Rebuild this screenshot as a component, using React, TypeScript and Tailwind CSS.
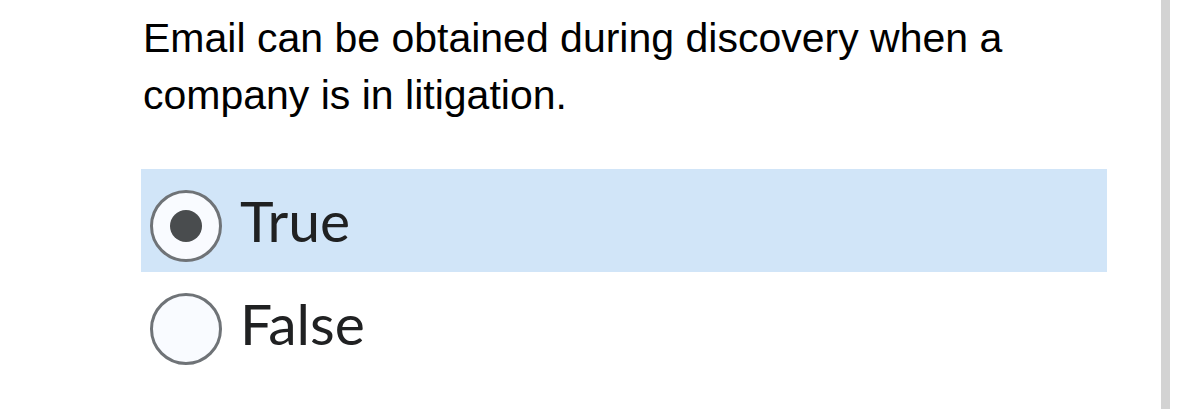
import { useState } from "react";

const options = ["True", "False"];

function Radio({ checked }: { checked: boolean }) {
  return (
    <span className="mt-[11px] flex h-[72px] w-[72px] shrink-0 items-center justify-center rounded-full border-[3px] border-[#6f7377] bg-[#f9fbff]">
      {checked && <span className="h-[32px] w-[32px] rounded-full bg-[#494c4e]" />}
    </span>
  );
}

export default function App() {
  const [selected, setSelected] = useState("True");

  return (
    <div className="flex h-[409px] w-[1179px] bg-white">
      <div className="ml-[141px] w-[966px]">
        <p className="pl-[2px] pt-[10px] font-['Liberation_Sans',Arial,sans-serif] text-[41px] leading-[57px] text-black">
          Email can be obtained during discovery when a company is in litigation.
        </p>
        <div className="mt-[45px]">
          {options.map((option) => (
            <label
              key={option}
              onClick={() => setSelected(option)}
              className={`flex h-[103px] cursor-pointer items-center gap-[18px] pl-[9px] ${
                selected === option ? "bg-[#d1e5f8]" : ""
              }`}
            >
              <Radio checked={selected === option} />
              <span className="font-['Lato',sans-serif] text-[57px] leading-none text-[#202122]">
                {option}
              </span>
            </label>
          ))}
        </div>
      </div>
      <div className="ml-[54px] h-full w-[9px] bg-[#d3d3d3]" />
    </div>
  );
}
